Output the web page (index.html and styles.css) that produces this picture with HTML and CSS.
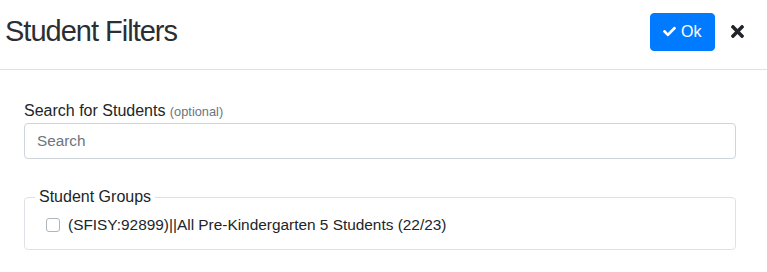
FILE: index.html
```html
<!DOCTYPE html>
<html>
<head>
<meta charset="utf-8">
<link rel="stylesheet" href="styles.css">
</head>
<body>
<div class="modal">
  <div class="header">
    <h1 class="title">Student Filters</h1>
    <div class="actions">
      <button class="btn-ok"><svg class="check" viewBox="0 0 512 512" width="13" height="13"><path fill="#fff" d="M173.9 439.4l-166.4-166.4c-10-10-10-26.2 0-36.2l36.2-36.2c10-10 26.2-10 36.2 0L192 312.7 432.1 72.6c10-10 26.2-10 36.2 0l36.2 36.2c10 10 10 26.2 0 36.2l-294.4 294.4c-10 10-26.2 10-36.2 0z"/></svg>Ok</button>
      <button class="btn-close"><svg viewBox="0 0 352 352" width="13" height="13"><path fill="#212529" d="M242.7 176l100.1-100.1c12.3-12.3 12.3-32.2 0-44.5l-22.2-22.2c-12.3-12.3-32.2-12.3-44.5 0L176 109.3 75.9 9.2c-12.3-12.3-32.2-12.3-44.5 0L9.2 31.4c-12.3 12.3-12.3 32.2 0 44.5L109.3 176 9.2 276.1c-12.3 12.3-12.3 32.2 0 44.5l22.2 22.2c12.3 12.3 32.2 12.3 44.5 0L176 242.7l100.1 100.1c12.3 12.3 32.2 12.3 44.5 0l22.2-22.2c12.3-12.3 12.3-32.2 0-44.5L242.7 176z"/></svg></button>
    </div>
  </div>
  <div class="body">
    <label class="label">Search for Students <span class="optional">(optional)</span></label>
    <input class="search" type="text" placeholder="Search">
    <fieldset class="groups">
      <legend class="legend">Student Groups</legend>
      <label class="check-row"><span class="box"></span>(SFISY:92899)||All Pre-Kindergarten 5 Students (22/23)</label>
    </fieldset>
  </div>
</div>
</body>
</html>
```
FILE: styles.css
```css
* { box-sizing: border-box; }
html, body { margin: 0; padding: 0; background: #fff; }
body { font-family: "Liberation Sans", Arial, sans-serif; color: #212529; }
.modal { width: 767px; }
.header {
  display: flex;
  align-items: center;
  justify-content: space-between;
  height: 70px;
  padding: 0 23px 0 5px;
  border-bottom: 1px solid #dee2e6;
}
.title { margin: 0; font-size: 29px; font-weight: 300; color: #2b2f33; letter-spacing: -1px; position: relative; top: -3px; }
.actions { display: flex; align-items: center; gap: 16px; position: relative; top: -3px; }
.btn-ok {
  display: flex; align-items: center; gap: 5px;
  width: 65px; height: 38px; padding: 0 0 0 12px;
  background: #007bff; color: #fff; border: 1px solid #007bff; border-radius: 4px;
  font-family: inherit; font-size: 16px;
}
.btn-close { background: none; border: 0; padding: 0; display: flex; align-items: center; }
.body { padding: 32px 31px 0 24px; }
.label { display: block; font-size: 16px; line-height: 18px; margin-bottom: 2px; }
.optional { font-size: 12.8px; color: #6c757d; }
.search {
  display: block; width: 712px; height: 36px;
  border: 1px solid #ced4da; border-radius: 4px;
  padding: 0 12px; font-family: inherit; font-size: 15.3px; color: #495057;
}
.search::placeholder { color: #6c757d; }
.groups {
  margin: 29px 0 0 0; padding: 10px 14px 15px 20px; width: 712px;
  border: 1px solid #dee2e6; border-radius: 4px;
}
.legend { font-size: 16px; padding: 0 4px; margin-left: -10px; line-height: 18px; }
.check-row { display: flex; align-items: center; font-size: 15.4px; line-height: 18px; }
.box { width: 14px; height: 14px; border: 1px solid #adb5bd; border-radius: 3px; margin: 0 8px 0 1px; }
```
